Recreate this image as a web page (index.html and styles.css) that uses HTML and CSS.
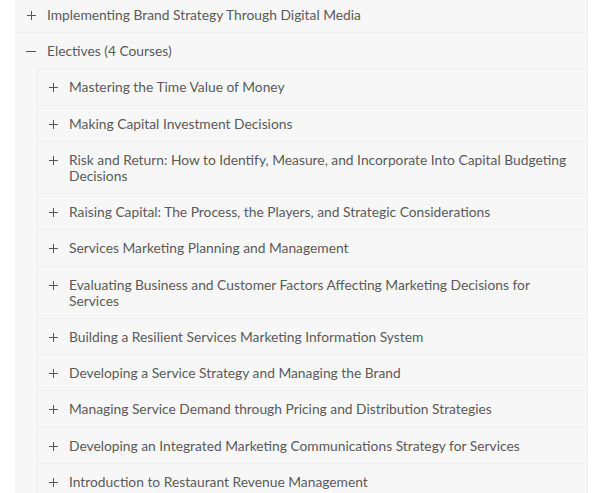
FILE: index.html
```html
<!DOCTYPE html>
<html>
<head>
<meta charset="utf-8">
<link rel="stylesheet" href="styles.css">
</head>
<body>
<div class="accordion">
  <div class="item"><div class="head"><span class="icon plus"></span><span class="label">Implementing Brand Strategy Through Digital Media</span></div></div>
  <div class="item open">
    <div class="head"><span class="icon minus"></span><span class="label">Electives (4 Courses)</span></div>
    <div class="nested">
      <div class="item"><div class="head"><span class="icon plus"></span><span class="label">Mastering the Time Value of Money</span></div></div>
      <div class="item"><div class="head"><span class="icon plus"></span><span class="label">Making Capital Investment Decisions</span></div></div>
      <div class="item"><div class="head"><span class="icon plus"></span><span class="label">Risk and Return: How to Identify, Measure, and Incorporate Into Capital Budgeting Decisions</span></div></div>
      <div class="item"><div class="head"><span class="icon plus"></span><span class="label">Raising Capital: The Process, the Players, and Strategic Considerations</span></div></div>
      <div class="item"><div class="head"><span class="icon plus"></span><span class="label">Services Marketing Planning and Management</span></div></div>
      <div class="item"><div class="head"><span class="icon plus"></span><span class="label">Evaluating Business and Customer Factors Affecting Marketing Decisions for Services</span></div></div>
      <div class="item"><div class="head"><span class="icon plus"></span><span class="label">Building a Resilient Services Marketing Information System</span></div></div>
      <div class="item"><div class="head"><span class="icon plus"></span><span class="label">Developing a Service Strategy and Managing the Brand</span></div></div>
      <div class="item"><div class="head"><span class="icon plus"></span><span class="label">Managing Service Demand through Pricing and Distribution Strategies</span></div></div>
      <div class="item"><div class="head"><span class="icon plus"></span><span class="label">Developing an Integrated Marketing Communications Strategy for Services</span></div></div>
      <div class="item"><div class="head"><span class="icon plus"></span><span class="label">Introduction to Restaurant Revenue Management</span></div></div>
    </div>
  </div>
</div>
</body>
</html>
```
FILE: styles.css
```css
html, body {
  margin: 0;
  padding: 0;
  background: #ffffff;
  overflow: hidden;
}
body {
  font-family: "Lato", "Open Sans", sans-serif;
  font-size: 13.8px;
  color: #5a5a5a;
}
.accordion {
  margin: -3px 0 0 15px;
  width: 572px;
  background: #f7f7f7;
  border-right: 1px solid #ececec;
}
.item {
  border-bottom: 1px solid #ededed;
}
.nested .item:last-child {
  border-bottom: none;
}
.head {
  display: flex;
  align-items: flex-start;
  padding: 10px 12px 9px 12px;
  line-height: 16.2px;
}
.icon {
  position: relative;
  flex: 0 0 9px;
  width: 9px;
  height: 16px;
  margin-right: 11px;
}
.icon::before,
.icon::after {
  content: "";
  position: absolute;
  background: #555;
}
.icon::before {
  left: 0;
  top: 8px;
  width: 9px;
  height: 1px;
}
.plus::after {
  left: 4px;
  top: 4px;
  width: 1px;
  height: 9px;
}
.minus::before {
  left: -1px;
  width: 10px;
}
.label {
  flex: 1;
}
.nested {
  margin-left: 22px;
  border-left: 1px solid #ededed;
  border-top: 1px solid #ededed;
}
.nested .head {
  padding-left: 11px;
}
```
